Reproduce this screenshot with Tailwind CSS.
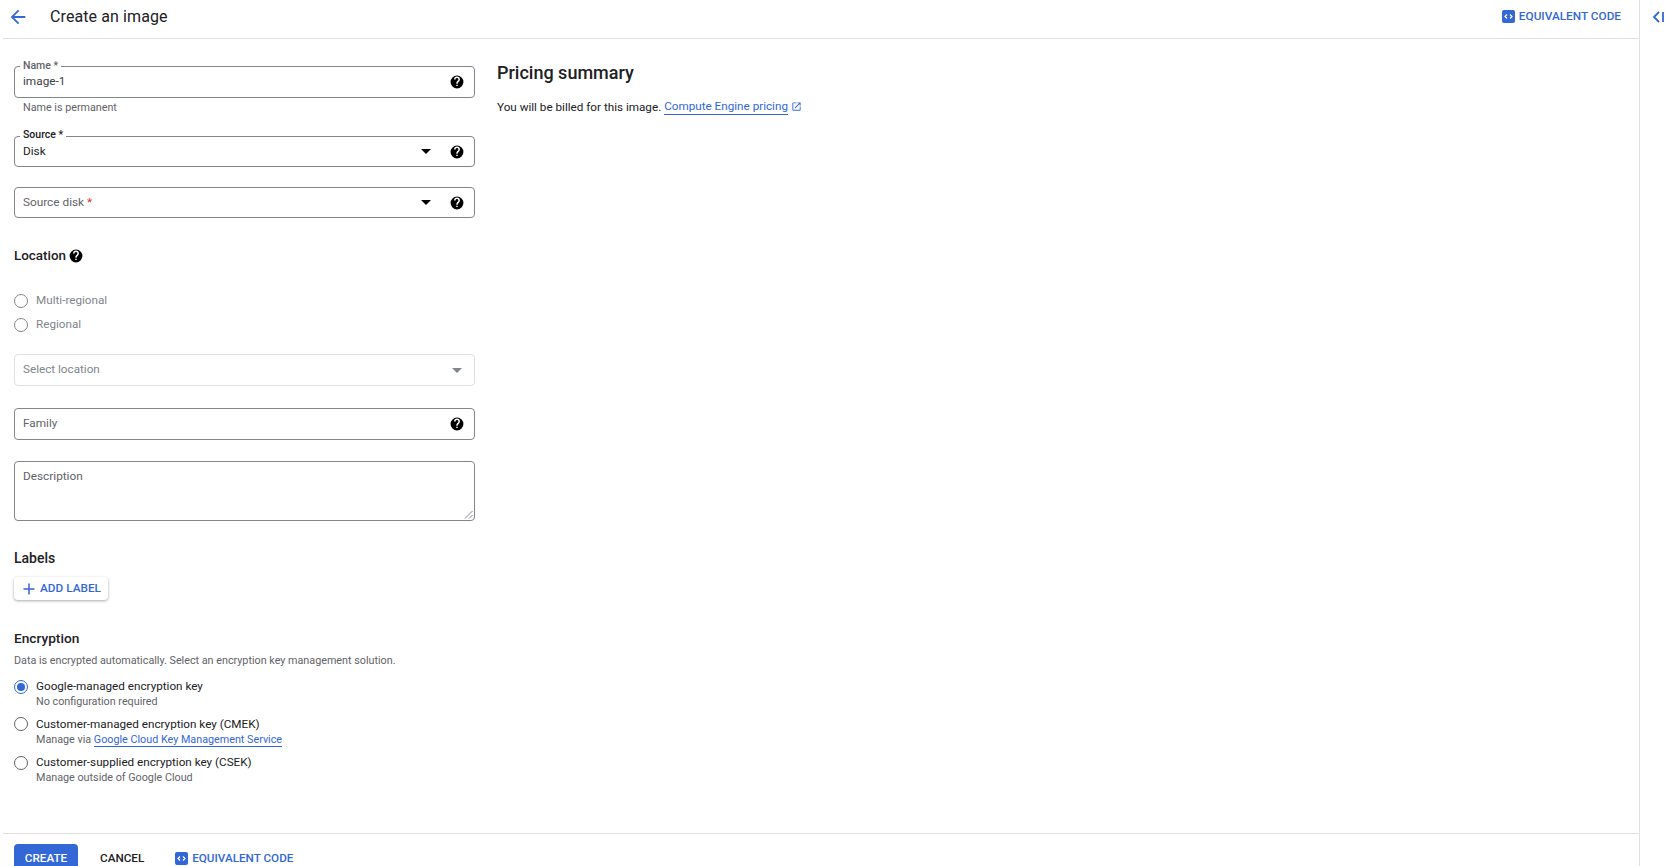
<!DOCTYPE html>
<html>
<head>
<meta charset="utf-8">
<script src="https://cdn.jsdelivr.net/npm/@tailwindcss/browser@4"></script>
</head>
<body class="bg-white overflow-hidden font-['Roboto',sans-serif] text-[#202124]">
<div class="flex h-[866px] w-[1676px] overflow-hidden">
  <main class="w-[1640px] h-full border-r border-[#e0e0e0] flex flex-col pl-[3px]">
    <header class="h-[39px] shrink-0 border-b border-[#e0e0e0] flex items-center pl-[4px] pr-[18px] pb-[5px]">
      <svg class="w-[22px] h-[22px] text-[#3367d6]" viewBox="0 0 24 24" fill="currentColor"><path d="M20 11H7.83l5.59-5.59L12 4l-8 8 8 8 1.41-1.41L7.83 13H20z"/></svg>
      <h1 class="ml-[21px] text-[16px] leading-6 text-[#202124] font-normal tracking-[0.1px]">Create an image</h1>
      <div class="ml-auto flex items-center gap-[4px] text-[#3367d6] text-[11.8px] font-medium">
        <svg class="w-[13px] h-[13px]" viewBox="0 0 13 13"><rect width="13" height="13" rx="2" fill="currentColor"/><path d="M5 4.5 3 6.5l2 2M8 4.5l2 2-2 2" stroke="#fff" stroke-width="1.2" fill="none"/></svg>
        <span>EQUIVALENT CODE</span>
      </div>
    </header>
    <div class="flex flex-1 min-h-0">
      <form class="w-[475px] shrink-0 pl-[11px] pt-[27px]">
        <div class="relative w-[461px] h-[32px] border border-[#80868b] rounded-[4px] flex items-center pl-[8px] pr-[10px] text-[11.8px] text-[#3c4043]">
          <span class="absolute left-[5px] -top-[7px] bg-white px-[3px] text-[10.5px] leading-3 font-medium text-[#5f6368]">Name *</span>
          <span>image-1</span>
          <svg class="ml-auto w-[14px] h-[14px]" viewBox="0 0 24 24"><path d="M12 1a11 11 0 1 0 0 22 11 11 0 0 0 0-22zm1.2 18h-2.5v-2.5h2.5V19zm2.6-8.3-1.1 1.1c-.9.9-1.4 1.6-1.4 3.2h-2.5v-.6c0-1.4.5-2.6 1.4-3.5l1.5-1.6c.5-.4.7-1 .7-1.7a2.4 2.4 0 0 0-4.9 0H7a5 5 0 0 1 10 0c0 1.1-.5 2.1-1.2 3.1z"/></svg>
        </div>
        <p class="pl-[9px] mt-[3px] text-[10.75px] leading-[14px] text-[#5f6368]">Name is permanent</p>
        <div class="relative mt-[21px] w-[461px] h-[31px] border border-[#80868b] rounded-[4px] flex items-center pl-[8px] pr-[10px] text-[11.8px] text-[#202124]">
          <span class="absolute left-[5px] -top-[8px] bg-white px-[3px] text-[10.5px] leading-3 font-medium text-[#202124]">Source *</span>
          <span>Disk</span>
          <svg class="ml-auto w-[10px] h-[5px]" viewBox="0 0 10 5"><path d="M0 0h10L5 5z"/></svg>
          <svg class="ml-[19px] w-[14px] h-[14px]" viewBox="0 0 24 24"><path d="M12 1a11 11 0 1 0 0 22 11 11 0 0 0 0-22zm1.2 18h-2.5v-2.5h2.5V19zm2.6-8.3-1.1 1.1c-.9.9-1.4 1.6-1.4 3.2h-2.5v-.6c0-1.4.5-2.6 1.4-3.5l1.5-1.6c.5-.4.7-1 .7-1.7a2.4 2.4 0 0 0-4.9 0H7a5 5 0 0 1 10 0c0 1.1-.5 2.1-1.2 3.1z"/></svg>
        </div>
        <div class="mt-[20px] w-[461px] h-[31px] border border-[#80868b] rounded-[4px] flex items-center pl-[8px] pr-[10px] text-[11.8px] text-[#5f6368]">
          <span>Source disk <span class="text-[#d93025]">*</span></span>
          <svg class="ml-auto w-[10px] h-[5px]" viewBox="0 0 10 5"><path d="M0 0h10L5 5z"/></svg>
          <svg class="ml-[19px] w-[14px] h-[14px]" viewBox="0 0 24 24"><path d="M12 1a11 11 0 1 0 0 22 11 11 0 0 0 0-22zm1.2 18h-2.5v-2.5h2.5V19zm2.6-8.3-1.1 1.1c-.9.9-1.4 1.6-1.4 3.2h-2.5v-.6c0-1.4.5-2.6 1.4-3.5l1.5-1.6c.5-.4.7-1 .7-1.7a2.4 2.4 0 0 0-4.9 0H7a5 5 0 0 1 10 0c0 1.1-.5 2.1-1.2 3.1z"/></svg>
        </div>
        <h2 class="mt-[28px] flex items-center gap-[3px] text-[13.4px] leading-5 font-medium text-[#202124]">Location
          <svg class="w-[14px] h-[14px]" viewBox="0 0 24 24"><path d="M12 1a11 11 0 1 0 0 22 11 11 0 0 0 0-22zm1.2 18h-2.5v-2.5h2.5V19zm2.6-8.3-1.1 1.1c-.9.9-1.4 1.6-1.4 3.2h-2.5v-.6c0-1.4.5-2.6 1.4-3.5l1.5-1.6c.5-.4.7-1 .7-1.7a2.4 2.4 0 0 0-4.9 0H7a5 5 0 0 1 10 0c0 1.1-.5 2.1-1.2 3.1z"/></svg>
        </h2>
        <div class="mt-[23px] flex items-center gap-[8px] h-[24px] text-[11.7px] text-[#80868b]">
          <span class="w-[14px] h-[14px] rounded-full border border-[#80868b]"></span><span>Multi-regional</span>
        </div>
        <div class="flex items-center gap-[8px] h-[24px] text-[11.7px] text-[#80868b]">
          <span class="w-[14px] h-[14px] rounded-full border border-[#80868b]"></span><span>Regional</span>
        </div>
        <div class="mt-[17px] w-[461px] h-[32px] border border-[#e0e0e0] rounded-[4px] flex items-center pl-[8px] pr-[12px] text-[11.7px] text-[#80868b]">
          <span>Select location</span>
          <svg class="ml-auto w-[10px] h-[5px] text-[#80868b]" viewBox="0 0 10 5" fill="currentColor"><path d="M0 0h10L5 5z"/></svg>
        </div>
        <div class="mt-[22px] w-[461px] h-[32px] border border-[#80868b] rounded-[4px] flex items-center pl-[8px] pr-[10px] text-[11.8px] text-[#5f6368]">
          <span>Family</span>
          <svg class="ml-auto w-[14px] h-[14px]" viewBox="0 0 24 24"><path d="M12 1a11 11 0 1 0 0 22 11 11 0 0 0 0-22zm1.2 18h-2.5v-2.5h2.5V19zm2.6-8.3-1.1 1.1c-.9.9-1.4 1.6-1.4 3.2h-2.5v-.6c0-1.4.5-2.6 1.4-3.5l1.5-1.6c.5-.4.7-1 .7-1.7a2.4 2.4 0 0 0-4.9 0H7a5 5 0 0 1 10 0c0 1.1-.5 2.1-1.2 3.1z"/></svg>
        </div>
        <div class="relative mt-[21px] w-[461px] h-[60px] border border-[#80868b] rounded-[4px] pl-[8px] pt-[6px] text-[11.8px] leading-4 text-[#5f6368]">
          Description
          <svg class="absolute right-[1px] bottom-[1px] w-[9px] h-[9px]" viewBox="0 0 9 9"><path d="M1 8.5 8.5 1M5 8.5 8.5 5" stroke="#5f6368" stroke-width=".8" fill="none"/></svg>
        </div>
        <h2 class="mt-[27px] text-[14px] leading-5 font-medium text-[#202124]">Labels</h2>
        <button type="button" class="mt-[9px] w-[94px] h-[23px] rounded-[4px] bg-white shadow-[0_1px_3px_rgba(60,64,67,0.45)] flex items-center pl-[9px] gap-[5px] text-[11.8px] font-medium text-[#3367d6]">
          <svg class="w-[12px] h-[12px]" viewBox="0 0 12 12"><path d="M6 .5v11M.5 6h11" stroke="currentColor" stroke-width="1.5"/></svg>ADD LABEL
        </button>
        <h2 class="mt-[28px] text-[13.7px] leading-5 font-medium text-[#202124]">Encryption</h2>
        <p class="mt-[5px] text-[10.77px] leading-[16px] text-[#5f6368]">Data is encrypted automatically. Select an encryption key management solution.</p>
        <div class="mt-[9px] flex gap-[8px] h-[38px]">
          <span class="mt-[2px] w-[14px] h-[14px] rounded-full border border-[#3367d6] flex items-center justify-center"><span class="w-[8px] h-[8px] rounded-full bg-[#3367d6]"></span></span>
          <div><div class="text-[11.7px] leading-4 text-[#202124]">Google-managed encryption key</div><div class="text-[10.77px] leading-[14px] text-[#5f6368] mt-px">No configuration required</div></div>
        </div>
        <div class="flex gap-[8px] h-[38px]">
          <span class="mt-[1px] w-[14px] h-[14px] rounded-full border border-[#5f6368]"></span>
          <div><div class="text-[11.7px] leading-4 text-[#202124]">Customer-managed encryption key (CMEK)</div><div class="text-[10.77px] leading-[14px] text-[#5f6368] mt-px">Manage via <span class="text-[#3367d6] border-b border-[#3367d6]">Google Cloud Key Management Service</span></div></div>
        </div>
        <div class="flex gap-[8px] h-[38px]">
          <span class="mt-[2px] w-[14px] h-[14px] rounded-full border border-[#5f6368]"></span>
          <div><div class="text-[11.7px] leading-4 text-[#202124]">Customer-supplied encryption key (CSEK)</div><div class="text-[10.77px] leading-[14px] text-[#5f6368] mt-px">Manage outside of Google Cloud</div></div>
        </div>
      </form>
      <section class="pl-[19px] pt-[22px]">
        <h2 class="text-[18px] leading-6 font-medium text-[#202124]">Pricing summary</h2>
        <p class="mt-[13px] text-[11.7px] leading-4 text-[#202124] flex items-center">You will be billed for this image.&nbsp;<span class="text-[#3367d6] border-b border-[#3367d6]">Compute Engine pricing</span>
          <svg class="ml-[3px] w-[11px] h-[11px] text-[#3367d6]" viewBox="0 0 24 24" fill="currentColor"><path d="M19 19H5V5h7V3H5a2 2 0 0 0-2 2v14c0 1.1.9 2 2 2h14a2 2 0 0 0 2-2v-7h-2v7zM14 3v2h3.6l-9.8 9.8 1.4 1.4L19 6.4V10h2V3h-7z"/></svg>
        </p>
      </section>
    </div>
    <footer class="h-[33px] shrink-0 border-t border-[#e0e0e0] flex items-start pl-[11px] pt-[10px] text-[11.7px] font-medium">
      <span class="w-[64px] h-[30px] rounded-t-[4px] bg-[#3367d6] text-white text-center pt-[6px] leading-4">CREATE</span>
      <span class="ml-[22px] pt-[6px] leading-4 text-[#202124]">CANCEL</span>
      <span class="ml-[31px] pt-[6px] flex items-center gap-[4px] leading-4 text-[#3367d6]">
        <svg class="w-[13px] h-[13px]" viewBox="0 0 13 13"><rect width="13" height="13" rx="2" fill="currentColor"/><path d="M5 4.5 3 6.5l2 2M8 4.5l2 2-2 2" stroke="#fff" stroke-width="1.2" fill="none"/></svg>EQUIVALENT CODE
      </span>
    </footer>
  </main>
  <aside class="flex-1 pt-[10px] pl-[12px]">
    <svg class="w-[13px] h-[14px] text-[#3367d6]" viewBox="0 0 13 14" fill="none" stroke="currentColor" stroke-width="1.8"><path d="M7 2 2 7l5 5"/><path d="M11 2v10"/></svg>
  </aside>
</div>
</body>
</html>
